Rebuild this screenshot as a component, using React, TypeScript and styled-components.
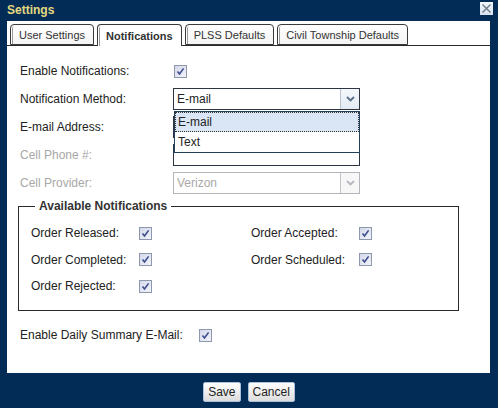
import React from 'react'
import styled, { createGlobalStyle } from 'styled-components'

const Global = createGlobalStyle`
  html, body { margin: 0; padding: 0; }
  body {
    background: #022b55;
    font-family: "Liberation Sans", Arial, sans-serif;
    font-size: 12px;
    color: #222;
  }
`

const Window = styled.div`
  width: 498px;
  height: 408px;
  background: #022b55;
  display: flex;
  flex-direction: column;
  box-sizing: border-box;
`

const TitleBar = styled.div`
  height: 21px;
  display: flex;
  align-items: center;
  justify-content: space-between;
  padding: 0 5px 2px 7px;
  box-sizing: border-box;
  .title {
    color: #e4da80;
    font-weight: bold;
    font-size: 12px;
  }
`

const CloseBtn = styled.span`
  width: 13px;
  height: 13px;
  background: linear-gradient(#f2f6fb, #d8e2ee);
  display: flex;
  align-items: center;
  justify-content: center;
  margin-bottom: 3px;
`

const Panel = styled.div`
  margin: 0 8px 0 7px;
  height: 352px;
  background: #fff;
  display: flex;
  flex-direction: column;
`

const TabStrip = styled.div`
  height: 23px;
  padding: 1px 0 0 3px;
  display: flex;
  align-items: flex-end;
  gap: 3px;
  border-bottom: 1px solid #2a2a2a;
  box-sizing: content-box;
`

const Tab = styled.div<{ $active?: boolean }>`
  height: ${p => (p.$active ? 22 : 21)}px;
  margin-bottom: ${p => (p.$active ? -1 : 0)}px;
  padding: 0 8px;
  border: 1px solid #3a3a3a;
  border-bottom: ${p => (p.$active ? 'none' : '1px solid #3a3a3a')};
  border-radius: 4px 4px 0 0;
  box-shadow: inset 1px 1px 0 #fff, inset 2px 0 0 #9a9a9a;
  background: ${p => (p.$active ? '#fff' : 'linear-gradient(#ffffff, #f4f4f4)')};
  display: flex;
  align-items: center;
  font-size: 11px;
  font-weight: ${p => (p.$active ? 'bold' : 'normal')};
  color: #333;
  box-sizing: border-box;
  white-space: nowrap;
`

const Body = styled.div`
  padding: 11px 0 0 13px;
  display: flex;
  flex-direction: column;
`

const Row = styled.div<{ $disabled?: boolean; $labelWidth?: number }>`
  height: 28px;
  display: flex;
  align-items: center;
  > label {
    width: ${p => p.$labelWidth ?? 153}px;
    color: ${p => (p.$disabled ? '#a8a8a8' : '#222')};
    white-space: nowrap;
  }
`

const Box = styled.span`
  width: 13px;
  height: 13px;
  border: 1px solid #8e98ac;
  background: linear-gradient(135deg, #d4d8ea, #f2f3f9);
  box-sizing: border-box;
  display: flex;
  align-items: center;
  justify-content: center;
  margin-left: 1px;
`

const Check = () => (
  <Box>
    <svg width="9" height="9" viewBox="0 0 9 9">
      <path d="M1.5 4.6 L3.5 7 L7.6 1.4" fill="none" stroke="#3b4b8c" strokeWidth="1.6" />
    </svg>
  </Box>
)

const Field = styled.div<{ $disabled?: boolean }>`
  position: relative;
  width: 187px;
  height: 22px;
  border: 1px solid ${p => (p.$disabled ? '#b2b6ba' : '#2c3642')};
  box-sizing: border-box;
  display: flex;
  align-items: center;
  color: ${p => (p.$disabled ? '#a8a8a8' : '#222')};
  background: #fff;
  > .val {
    flex: 1;
    padding-left: 3px;
  }
`

const Arrow = styled.span<{ $disabled?: boolean }>`
  width: 18px;
  height: 100%;
  border-left: 1px solid ${p => (p.$disabled ? '#c2c6ca' : '#b8c4d2')};
  background: ${p => (p.$disabled ? '#f7f7f7' : 'linear-gradient(#f4f8fc, #e2ebf4)')};
  display: flex;
  align-items: center;
  justify-content: center;
`

const Chevron = ({ color }: { color: string }) => (
  <svg width="9" height="6" viewBox="0 0 9 6">
    <path d="M1 1 L4.5 4.5 L8 1" fill="none" stroke={color} strokeWidth="1.8" />
  </svg>
)

const ListBox = styled.div`
  position: absolute;
  top: 22px;
  left: 0;
  width: 186px;
  border: 1px solid #23405a;
  box-sizing: border-box;
  background: #fff;
  z-index: 5;
`

const Option = styled.div<{ $selected?: boolean }>`
  height: 20px;
  display: flex;
  align-items: center;
  padding-left: 2px;
  box-sizing: border-box;
  background: ${p => (p.$selected ? '#dae6f5' : '#fff')};
  border: 1px ${p => (p.$selected ? 'dotted #333' : 'solid transparent')};
`

const Group = styled.fieldset`
  margin: 2px 0 0 -2px;
  width: 441px;
  height: 112px;
  border: 1px solid #2a2a2a;
  padding: 7px 0 0 12px;
  box-sizing: border-box;
  > legend {
    margin-left: 4px;
    padding: 0 4px;
    font-weight: bold;
    color: #333;
  }
`

const Grid = styled.div`
  display: grid;
  grid-template-columns: 220px 200px;
  grid-auto-rows: 26.5px;
`

const Item = styled.div`
  display: flex;
  align-items: center;
  > label {
    width: 107px;
    white-space: nowrap;
  }
`

const Daily = styled(Row)`
  margin-top: 10px;
`

const Footer = styled.div`
  flex: 1;
  display: flex;
  align-items: center;
  justify-content: center;
  gap: 7px;
  padding-top: 2px;
`

const Button = styled.button`
  height: 20px;
  padding: 0 4px;
  border: 1px solid #a9c0d8;
  border-radius: 2px;
  background: linear-gradient(#ffffff, #dcdcdc);
  font-family: "Liberation Sans", Arial, sans-serif;
  font-size: 12px;
  color: #222;
`

export default function App() {
  return (
    <Window>
      <Global />
      <TitleBar>
        <span className="title">Settings</span>
        <CloseBtn>
          <svg width="11" height="11" viewBox="0 0 11 11">
            <path d="M1.5 1.5 L9.5 9.5 M9.5 1.5 L1.5 9.5" stroke="#6f7a86" strokeWidth="1.4" />
          </svg>
        </CloseBtn>
      </TitleBar>
      <Panel>
        <TabStrip>
          <Tab>User Settings</Tab>
          <Tab $active>Notifications</Tab>
          <Tab>PLSS Defaults</Tab>
          <Tab>Civil Township Defaults</Tab>
        </TabStrip>
        <Body>
          <Row>
            <label>Enable Notifications:</label>
            <Check />
          </Row>
          <Row>
            <label>Notification Method:</label>
            <Field>
              <span className="val">E-mail</span>
              <Arrow><Chevron color="#5b6f88" /></Arrow>
              <ListBox>
                <Option $selected>E-mail</Option>
                <Option>Text</Option>
              </ListBox>
            </Field>
          </Row>
          <Row>
            <label>E-mail Address:</label>
            <Field />
          </Row>
          <Row $disabled>
            <label>Cell Phone #:</label>
            <Field />
          </Row>
          <Row $disabled>
            <label>Cell Provider:</label>
            <Field $disabled>
              <span className="val">Verizon</span>
              <Arrow $disabled><Chevron color="#b5b9be" /></Arrow>
            </Field>
          </Row>
          <Group>
            <legend>Available Notifications</legend>
            <Grid>
              <Item><label>Order Released:</label><Check /></Item>
              <Item><label>Order Accepted:</label><Check /></Item>
              <Item><label>Order Completed:</label><Check /></Item>
              <Item><label>Order Scheduled:</label><Check /></Item>
              <Item><label>Order Rejected:</label><Check /></Item>
            </Grid>
          </Group>
          <Daily $labelWidth={178}>
            <label>Enable Daily Summary E-Mail:</label>
            <Check />
          </Daily>
        </Body>
      </Panel>
      <Footer>
        <Button>Save</Button>
        <Button>Cancel</Button>
      </Footer>
    </Window>
  )
}
